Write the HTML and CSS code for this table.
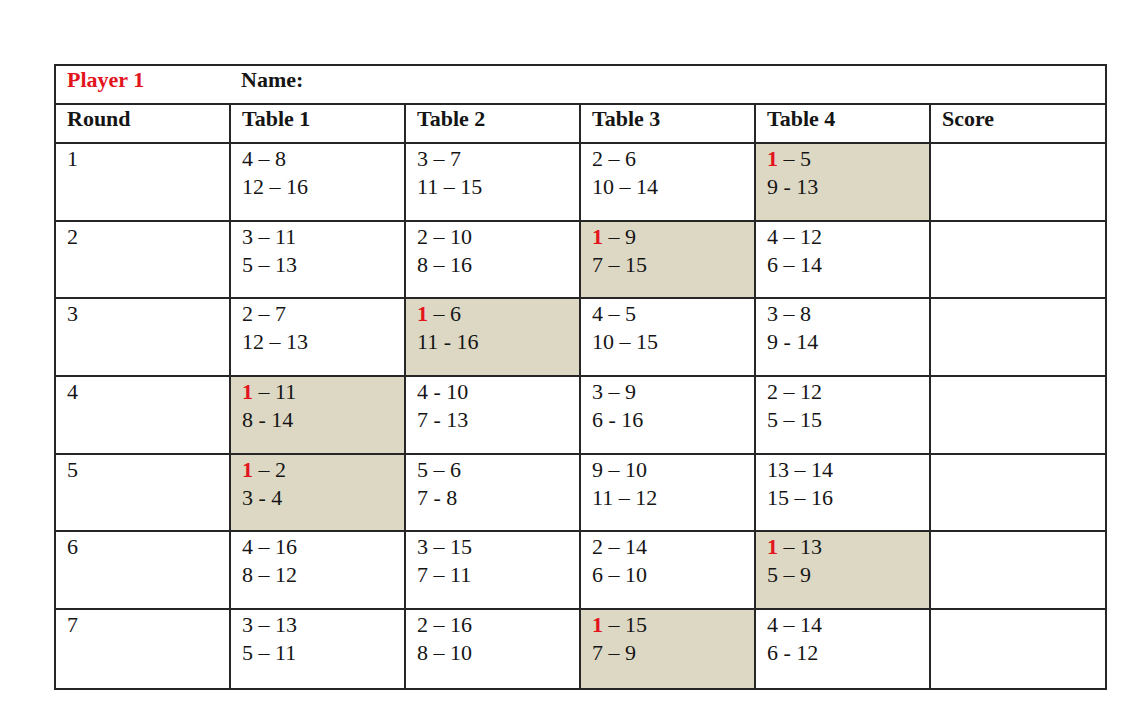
FILE: index.html
```html
<!DOCTYPE html>
<html>
<head>
<meta charset="utf-8">
<link rel="stylesheet" href="styles.css">
</head>
<body>
<table class="sheet">
  <colgroup>
    <col class="c"><col class="c"><col class="c"><col class="c"><col class="c"><col class="c-last">
  </colgroup>
  <tr class="head">
    <td class="player">Player 1</td>
    <td class="name" colspan="5">Name:</td>
  </tr>
  <tr class="head">
    <th>Round</th><th>Table 1</th><th>Table 2</th><th>Table 3</th><th>Table 4</th><th>Score</th>
  </tr>
  <tr class="row">
    <td>1</td>
    <td>4 – 8<br>12 – 16</td>
    <td>3 – 7<br>11 – 15</td>
    <td>2 – 6<br>10 – 14</td>
    <td class="me"><b class="one">1</b> – 5<br>9 - 13</td>
    <td></td>
  </tr>
  <tr class="row">
    <td>2</td>
    <td>3 – 11<br>5 – 13</td>
    <td>2 – 10<br>8 – 16</td>
    <td class="me"><b class="one">1</b> – 9<br>7 – 15</td>
    <td>4 – 12<br>6 – 14</td>
    <td></td>
  </tr>
  <tr class="row">
    <td>3</td>
    <td>2 – 7<br>12 – 13</td>
    <td class="me"><b class="one">1</b> – 6<br>11 - 16</td>
    <td>4 – 5<br>10 – 15</td>
    <td>3 – 8<br>9 - 14</td>
    <td></td>
  </tr>
  <tr class="row">
    <td>4</td>
    <td class="me"><b class="one">1</b> – 11<br>8 - 14</td>
    <td>4 - 10<br>7 - 13</td>
    <td>3 – 9<br>6 - 16</td>
    <td>2 – 12<br>5 – 15</td>
    <td></td>
  </tr>
  <tr class="row">
    <td>5</td>
    <td class="me"><b class="one">1</b> – 2<br>3 - 4</td>
    <td>5 – 6<br>7 - 8</td>
    <td>9 – 10<br>11 – 12</td>
    <td>13 – 14<br>15 – 16</td>
    <td></td>
  </tr>
  <tr class="row">
    <td>6</td>
    <td>4 – 16<br>8 – 12</td>
    <td>3 – 15<br>7 – 11</td>
    <td>2 – 14<br>6 – 10</td>
    <td class="me"><b class="one">1</b> – 13<br>5 – 9</td>
    <td></td>
  </tr>
  <tr class="row last">
    <td>7</td>
    <td>3 – 13<br>5 – 11</td>
    <td>2 – 16<br>8 – 10</td>
    <td class="me"><b class="one">1</b> – 15<br>7 – 9</td>
    <td>4 – 14<br>6 - 12</td>
    <td></td>
  </tr>
</table>
</body>
</html>
```

FILE: styles.css
```css
html, body {
  margin: 0;
  padding: 0;
  background: #ffffff;
}

body {
  font-family: "Liberation Serif", "Times New Roman", serif;
  font-size: 22px;
  color: #151515;
}

.sheet {
  margin: 64px 0 0 54px;
  width: 1051px;
  border-collapse: collapse;
  table-layout: fixed;
}

.c { width: 175px; }
.c-last { width: 176px; }

.sheet td,
.sheet th {
  border: 2px solid #262626;
  padding: 0 11px;
  vertical-align: top;
  text-align: left;
  line-height: 28px;
}

.head td,
.head th {
  height: 37px;
  font-weight: bold;
}

.head .player {
  color: #e3141d;
}

.head .name {
  border-left: hidden;
}

.row td {
  height: 74.7px;
  padding-top: 1px;
}

.row.last td {
  height: 77px;
}

.me {
  background: #ddd8c4;
}

.one {
  color: #e3141d;
  font-weight: bold;
}
```
